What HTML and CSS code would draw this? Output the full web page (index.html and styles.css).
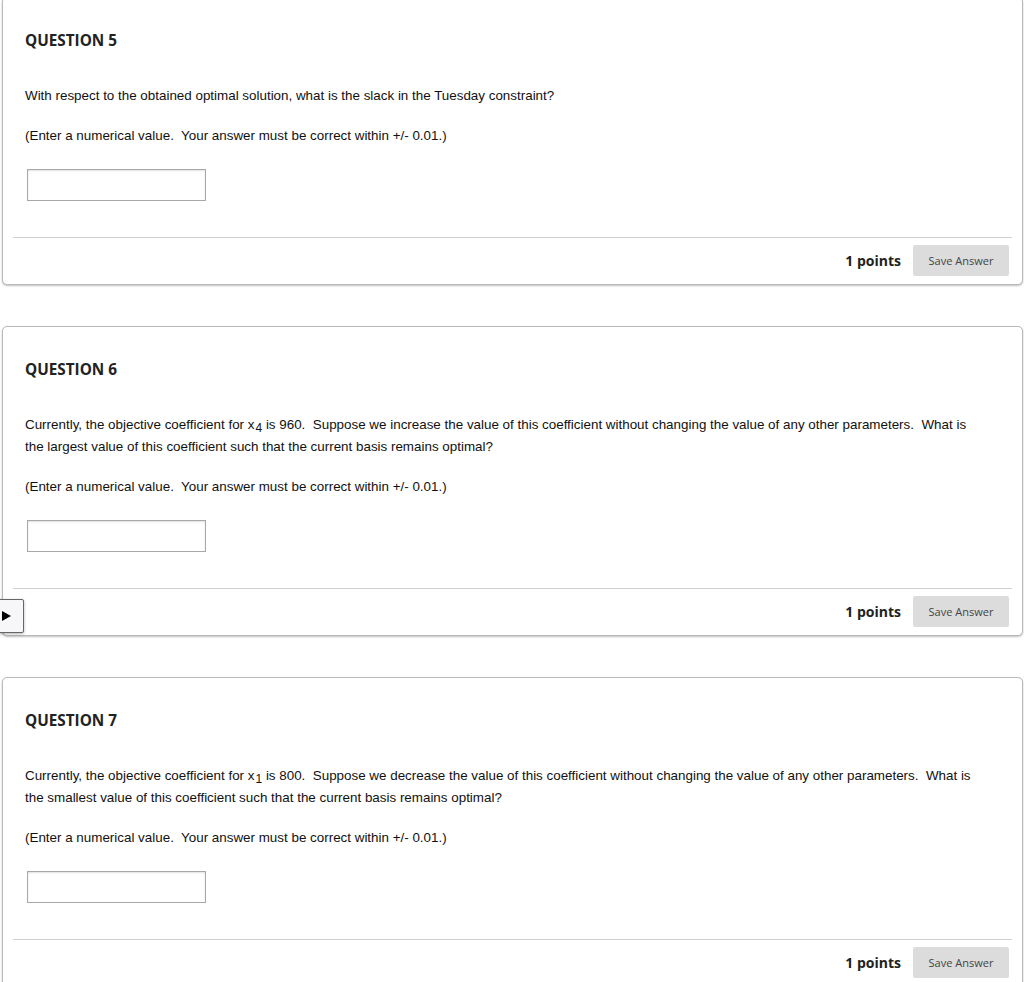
FILE: index.html
```html
<!DOCTYPE html>
<html>
<head>
<meta charset="utf-8">
<link rel="stylesheet" href="styles.css">
</head>
<body>
<div class="page">
  <div class="card">
    <h2 class="q-title">QUESTION 5</h2>
    <div class="q-body">
      <p>With respect to the obtained optimal solution, what is the slack in the Tuesday constraint?</p>
      <p>(Enter a numerical value.&nbsp; Your answer must be correct within +/- 0.01.)</p>
    </div>
    <input class="answer" type="text">
    <div class="q-footer">
      <span class="points">1 points</span>
      <button class="save">Save Answer</button>
    </div>
  </div>

  <div class="card">
    <button class="toggle" aria-label="Expand"><span class="tri"></span></button>
    <h2 class="q-title">QUESTION 6</h2>
    <div class="q-body">
      <p>Currently, the objective coefficient for x<sub>4</sub> is 960.&nbsp; Suppose we increase the value of this coefficient without changing the value of any other parameters.&nbsp; What is the largest value of this coefficient such that the current basis remains optimal?</p>
      <p>(Enter a numerical value.&nbsp; Your answer must be correct within +/- 0.01.)</p>
    </div>
    <input class="answer" type="text">
    <div class="q-footer">
      <span class="points">1 points</span>
      <button class="save">Save Answer</button>
    </div>
  </div>

  <div class="card">
    <h2 class="q-title">QUESTION 7</h2>
    <div class="q-body">
      <p>Currently, the objective coefficient for x<sub>1</sub> is 800.&nbsp; Suppose we decrease the value of this coefficient without changing the value of any other parameters.&nbsp; What is the smallest value of this coefficient such that the current basis remains optimal?</p>
      <p>(Enter a numerical value.&nbsp; Your answer must be correct within +/- 0.01.)</p>
    </div>
    <input class="answer" type="text">
    <div class="q-footer">
      <span class="points">1 points</span>
      <button class="save">Save Answer</button>
    </div>
  </div>
</div>
</body>
</html>
```

FILE: styles.css
```css
html, body {
  margin: 0;
  padding: 0;
  background: #fff;
  overflow: hidden;
}

.page {
  margin-top: -3px;
  padding-left: 2px;
  width: 1021px;
  display: flex;
  flex-direction: column;
  gap: 41px;
}

.card {
  position: relative;
  border: 1px solid #b9b9b9;
  border-radius: 5px;
  box-shadow: 0 1px 2px rgba(0, 0, 0, 0.25);
  padding: 31px 0 0 22px;
  background: #fff;
}

.q-title {
  margin: 0;
  font-family: "Open Sans", sans-serif;
  font-weight: 700;
  font-size: 15.3px;
  line-height: 22px;
  color: #222;
}

.q-body {
  margin-top: 34px;
  padding-right: 36px;
  font-family: "Liberation Sans", Arial, sans-serif;
  font-size: 13.4px;
  line-height: 22px;
  color: #111;
}

.q-body p {
  margin: 0 0 18px;
}

.q-body p:last-child {
  margin-bottom: 0;
}

.q-body sub {
  font-size: 12px;
  line-height: 0;
  vertical-align: -3px;
  margin-left: 1px;
}

.answer {
  display: block;
  box-sizing: border-box;
  margin: 22px 0 0 2px;
  width: 179px;
  height: 32px;
  border: 1px solid #a8a8a8;
  border-radius: 0;
  box-shadow: inset 0 1px 2px rgba(0, 0, 0, 0.12);
  padding: 0 6px;
  font-size: 13px;
}

.q-footer {
  margin: 36px 10px 0 -12px;
  border-top: 1px solid #cfcfcf;
  padding: 7px 3px 8px 0;
  display: flex;
  justify-content: flex-end;
  align-items: center;
  gap: 12px;
}

.points {
  font-family: "Open Sans", sans-serif;
  font-weight: 700;
  font-size: 14px;
  color: #222;
}

.save {
  width: 96px;
  height: 31px;
  border: none;
  border-radius: 2px;
  background: #dcdcdc;
  font-family: "Open Sans", sans-serif;
  font-size: 11px;
  color: #444;
  padding: 0;
}

.toggle {
  position: absolute;
  left: -5px;
  top: 272px;
  width: 26px;
  height: 34px;
  box-sizing: border-box;
  border: 1px solid #666;
  border-radius: 0 2px 2px 0;
  background: #f7f7fa;
  box-shadow: 0 1px 3px rgba(0, 0, 0, 0.3);
  padding: 0;
  display: flex;
  align-items: center;
  justify-content: flex-start;
}

.tri {
  display: block;
  margin-left: 3px;
  width: 0;
  height: 0;
  border-top: 5px solid transparent;
  border-bottom: 5px solid transparent;
  border-left: 9px solid #000;
}
```
